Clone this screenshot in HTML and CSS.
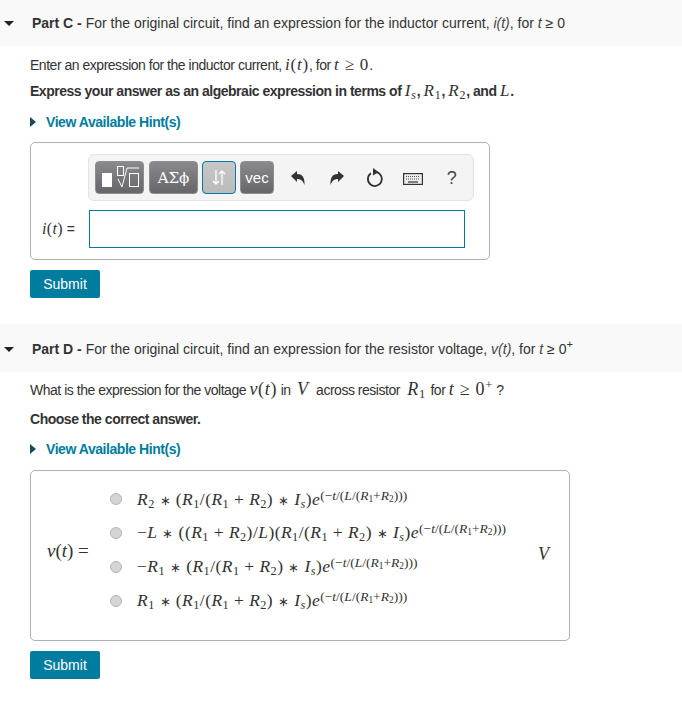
FILE: index.html
```html
<!DOCTYPE html>
<html lang="en">
<head>
<meta charset="utf-8">
<title>Parts C and D</title>
<link rel="stylesheet" href="styles.css">
</head>
<body>
<section class="part part-c">
  <header class="part-head">
    <span class="caret-down"></span>
    <h2 class="part-title"><b>Part C -</b> For the original circuit, find an expression for the inductor current, <i>i(t)</i>, for <i>t</i> ≥ 0</h2>
  </header>
  <div class="part-body">
    <p class="line l1">Enter an expression for the inductor current, <span class="m big"><i>i</i>(<i>t</i>)</span>, for <span class="m big"><i>t</i> ≥ 0</span>.</p>
    <p class="line l2"><b>Express your answer as an algebraic expression in terms of <span class="m big"><i>I</i><sub><i>s</i></sub></span>, <span class="m big"><i>R</i><sub>1</sub></span>, <span class="m big"><i>R</i><sub>2</sub></span>, and <span class="m big"><i>L</i></span>.</b></p>
    <a class="hint"><span class="caret-right"></span>View Available Hint(s)</a>
    <div class="answer-box box-c">
      <div class="toolbar">
        <span class="tbtn t1">
          <svg width="47" height="31" viewBox="0 0 47 31"><rect x="6" y="11" width="10" height="14" fill="#fff"/><rect x="21.500" y="4.500" width="6" height="9" fill="none" stroke="#fff"/><path d="M22 17l4 8 5-19h12" fill="none" stroke="#fff"/><rect x="33.500" y="11.500" width="9" height="13" fill="none" stroke="#fff"/></svg>
        </span>
        <span class="tbtn t2">ΑΣϕ</span>
        <span class="tbtn t3">
          <svg width="14" height="17" viewBox="0 0 14 17"><path d="M4 1v14M1 12l3 3 3-3M10 16V2M7 5l3-3 3 3" fill="none" stroke="#fff" stroke-width="1.300"/></svg>
        </span>
        <span class="tbtn t4">vec</span>
        <span class="tool"><svg width="14" height="16" viewBox="0 0 14 16"><path d="M0 6l6-5v3c5 0 8 3 7.500 11C12 11 10 9 6 9v3z" fill="#333"/></svg></span>
        <span class="tool"><svg width="14" height="16" viewBox="0 0 14 16"><path d="M14 6L8 1v3C3 4 0 7 .5 15 2 11 4 9 8 9v3z" fill="#333"/></svg></span>
        <span class="tool"><svg width="18" height="20" viewBox="0 0 18 20"><path d="M10.500 4.200A7 7 0 1 1 5 5.200" fill="none" stroke="#333" stroke-width="1.800"/><path d="M7 0l5.500 4L7 7.500z" fill="#333"/></svg></span>
        <span class="tool t8"><svg width="20" height="12" viewBox="0 0 20 12"><rect x=".6" y=".6" width="18.800" height="10.800" fill="#eee" stroke="#333" stroke-width="1.200"/><path d="M3 3.500h14M3 6h14" stroke="#555" stroke-width="1.200" stroke-dasharray="1 1"/><path d="M5 9h10" stroke="#333" stroke-width="1.200"/></svg></span>
        <span class="tool t9">?</span>
      </div>
      <div class="answer-row">
        <label class="answer-label"><span class="m lab"><i>i</i>(<i>t</i>)</span> =</label>
        <div class="answer-input"></div>
      </div>
    </div>
    <button class="submit">Submit</button>
  </div>
</section>

<section class="part part-d">
  <header class="part-head">
    <span class="caret-down"></span>
    <h2 class="part-title"><b>Part D -</b> For the original circuit, find an expression for the resistor voltage, <i>v(t)</i>, for <i>t</i> ≥ 0<sup>+</sup></h2>
  </header>
  <div class="part-body">
    <p class="line d1">What is the expression for the voltage <span class="m big xl"><i>v</i>(<i>t</i>)</span> in <span class="m big xl sp"><i>V</i></span> across resistor <span class="m big xl spr"><i>R</i><sub>1</sub></span> for <span class="m big xl"><i>t</i> ≥ 0<sup>+</sup></span> ?</p>
    <p class="line d2"><b>Choose the correct answer.</b></p>
    <a class="hint"><span class="caret-right"></span>View Available Hint(s)</a>
    <div class="answer-box box-d">
      <div class="choice-lhs m"><i>v</i>(<i>t</i>) =</div>
      <div class="choices">
        <div class="choice"><span class="radio"></span><span class="m"><i>R</i><sub>2</sub> <span class="op">∗</span> (<i>R</i><sub>1</sub>/(<i>R</i><sub>1</sub> + <i>R</i><sub>2</sub>) <span class="op">∗</span> <i>I</i><sub><i>s</i></sub>)<i>e</i><sup>(−<i>t</i>/(<i>L</i>/(<i>R</i><sub>1</sub>+<i>R</i><sub>2</sub>)))</sup></span></div>
        <div class="choice"><span class="radio"></span><span class="m">−<i>L</i> <span class="op">∗</span> ((<i>R</i><sub>1</sub> + <i>R</i><sub>2</sub>)/<i>L</i>)(<i>R</i><sub>1</sub>/(<i>R</i><sub>1</sub> + <i>R</i><sub>2</sub>) <span class="op">∗</span> <i>I</i><sub><i>s</i></sub>)<i>e</i><sup>(−<i>t</i>/(<i>L</i>/(<i>R</i><sub>1</sub>+<i>R</i><sub>2</sub>)))</sup></span></div>
        <div class="choice"><span class="radio"></span><span class="m">−<i>R</i><sub>1</sub> <span class="op">∗</span> (<i>R</i><sub>1</sub>/(<i>R</i><sub>1</sub> + <i>R</i><sub>2</sub>) <span class="op">∗</span> <i>I</i><sub><i>s</i></sub>)<i>e</i><sup>(−<i>t</i>/(<i>L</i>/(<i>R</i><sub>1</sub>+<i>R</i><sub>2</sub>)))</sup></span></div>
        <div class="choice"><span class="radio"></span><span class="m"><i>R</i><sub>1</sub> <span class="op">∗</span> (<i>R</i><sub>1</sub>/(<i>R</i><sub>1</sub> + <i>R</i><sub>2</sub>) <span class="op">∗</span> <i>I</i><sub><i>s</i></sub>)<i>e</i><sup>(−<i>t</i>/(<i>L</i>/(<i>R</i><sub>1</sub>+<i>R</i><sub>2</sub>)))</sup></span></div>
      </div>
      <div class="choice-unit m"><i>V</i></div>
    </div>
    <button class="submit">Submit</button>
  </div>
</section>
</body>
</html>
```

FILE: styles.css
```css
* { box-sizing: border-box; }
html, body { margin: 0; padding: 0; background: #fff; }
body { width: 682px; height: 706px; overflow: hidden; font-family: "Liberation Sans", Arial, sans-serif; font-size: 14px; line-height: 20px; color: #333; }

.part-head { display: flex; align-items: center; height: 46px; background: #f9f9f9; }
.part-d { margin-top: 26px; }
.part-d .part-head { height: 48px; padding-top: 2px; }
.caret-down { width: 0; height: 0; margin: 0 18px 0 4px; border-left: 5px solid transparent; border-right: 5px solid transparent; border-top: 5px solid #222; }
.part-title { margin: 0; font-size: 14px; font-weight: 400; line-height: 20px; color: #333; white-space: nowrap; }
.part-title i { color: #444; }
.part-title sup { font-size: 11px; line-height: 0; }

.part-body { padding-left: 30px; }
.line { margin: 0; white-space: nowrap; letter-spacing: -.48px; }
.l1 { padding-top: 9px; height: 35px; }
.l2 { height: 26px; }
.d1 { padding-top: 8px; height: 33px; }
.d2 { padding-top: 4px; height: 29px; }
.hint { display: flex; align-items: center; height: 20px; margin-top: 5px; margin-bottom: -1px; font-weight: 700; letter-spacing: -.45px; color: #007c9e; }
.d2 + .hint { margin-top: 5px; margin-bottom: 0; }
.caret-right { width: 0; height: 0; margin-right: 10px; border-top: 5px solid transparent; border-bottom: 5px solid transparent; border-left: 6px solid #1a4a5c; }

.m { font-family: "Liberation Serif", "Times New Roman", serif; color: #333; font-size: 15px; line-height: 1; }
.m.big { font-size: 17px; letter-spacing: .8px; }
.m.big.xl { font-size: 18px; letter-spacing: .7px; }
.m.sp { margin: 0 4px 0 3px; }
.m.spr { margin: 0 1px 0 4px; }
.m sub { font-size: 70%; line-height: 0; vertical-align: -3px; font-style: normal; }
.m sup { font-size: 70%; line-height: 0; vertical-align: 6px; }
.m sup sub { font-size: 70%; vertical-align: -2px; }
b .m { font-weight: 400; }

.answer-box { width: 460px; border: 1px solid #b0b0b0; border-radius: 5px; margin-top: 11px; }
.box-c { height: 118px; padding: 11px 9px 0 0; }
.toolbar { display: flex; align-items: center; width: 386px; height: 47px; margin-left: 57px; padding-left: 6px; background: #f4f4f4; border: 1px solid #e3e3e3; border-radius: 6px; }
.tbtn { display: flex; align-items: center; justify-content: center; height: 33px; margin-right: 4px; border-radius: 4px; color: #fff; background: linear-gradient(#8a898d, #66656a); border: 1px solid #8e8e8e; }
.t1 { width: 49px; margin-right: 5px; }
.t2 { width: 49px; font-family: "DejaVu Serif", serif; font-size: 15px; }
.t3 { width: 34px; background: linear-gradient(#c7c7c7, #bbb); border-color: #007c9e; }
.t4 { width: 34px; margin-right: 5px; font-size: 15px; }
.tool { display: flex; align-items: center; justify-content: center; width: 38.400px; height: 33px; color: #333; }
.t8 { padding-top: 3px; }
.t9 { font-size: 18px; color: #444; }
.answer-row { display: flex; align-items: center; margin-top: 9px; }
.answer-label { width: 58px; padding-left: 11px; font-size: 14px; white-space: nowrap; }
.m.lab { font-size: 16px; letter-spacing: .3px; }
.answer-input { width: 376px; height: 38px; border: 1px solid #007c9e; background: #fff; }

.submit { display: block; width: 70px; height: 28px; margin: 10px 0 0; padding: 0; border: 0; border-radius: 2px; background: #007c9e; color: #fff; font-family: inherit; font-size: 14px; }

.box-d { display: flex; align-items: center; width: 540px; height: 171px; margin-top: 11px; }
.choice-lhs { width: 79px; padding: 0 0 10px 16px; font-size: 19px; white-space: nowrap; }
.choices { flex: 1; display: flex; flex-direction: column; margin-top: -11px; }
.choice { display: flex; align-items: center; height: 33.700px; white-space: nowrap; }
.radio { width: 12px; height: 12px; margin-right: 15px; border-radius: 50%; border: 1px solid #b5b5b5; background: #d5d5d5; }
.choice .m { font-size: 17.500px; letter-spacing: .45px; }
.choice .m > sup { font-size: 13.500px; letter-spacing: 0; vertical-align: 5px; }
.op { font-size: 13px; }
.choice-unit { width: 31px; padding-bottom: 4px; font-size: 18px; }
```
